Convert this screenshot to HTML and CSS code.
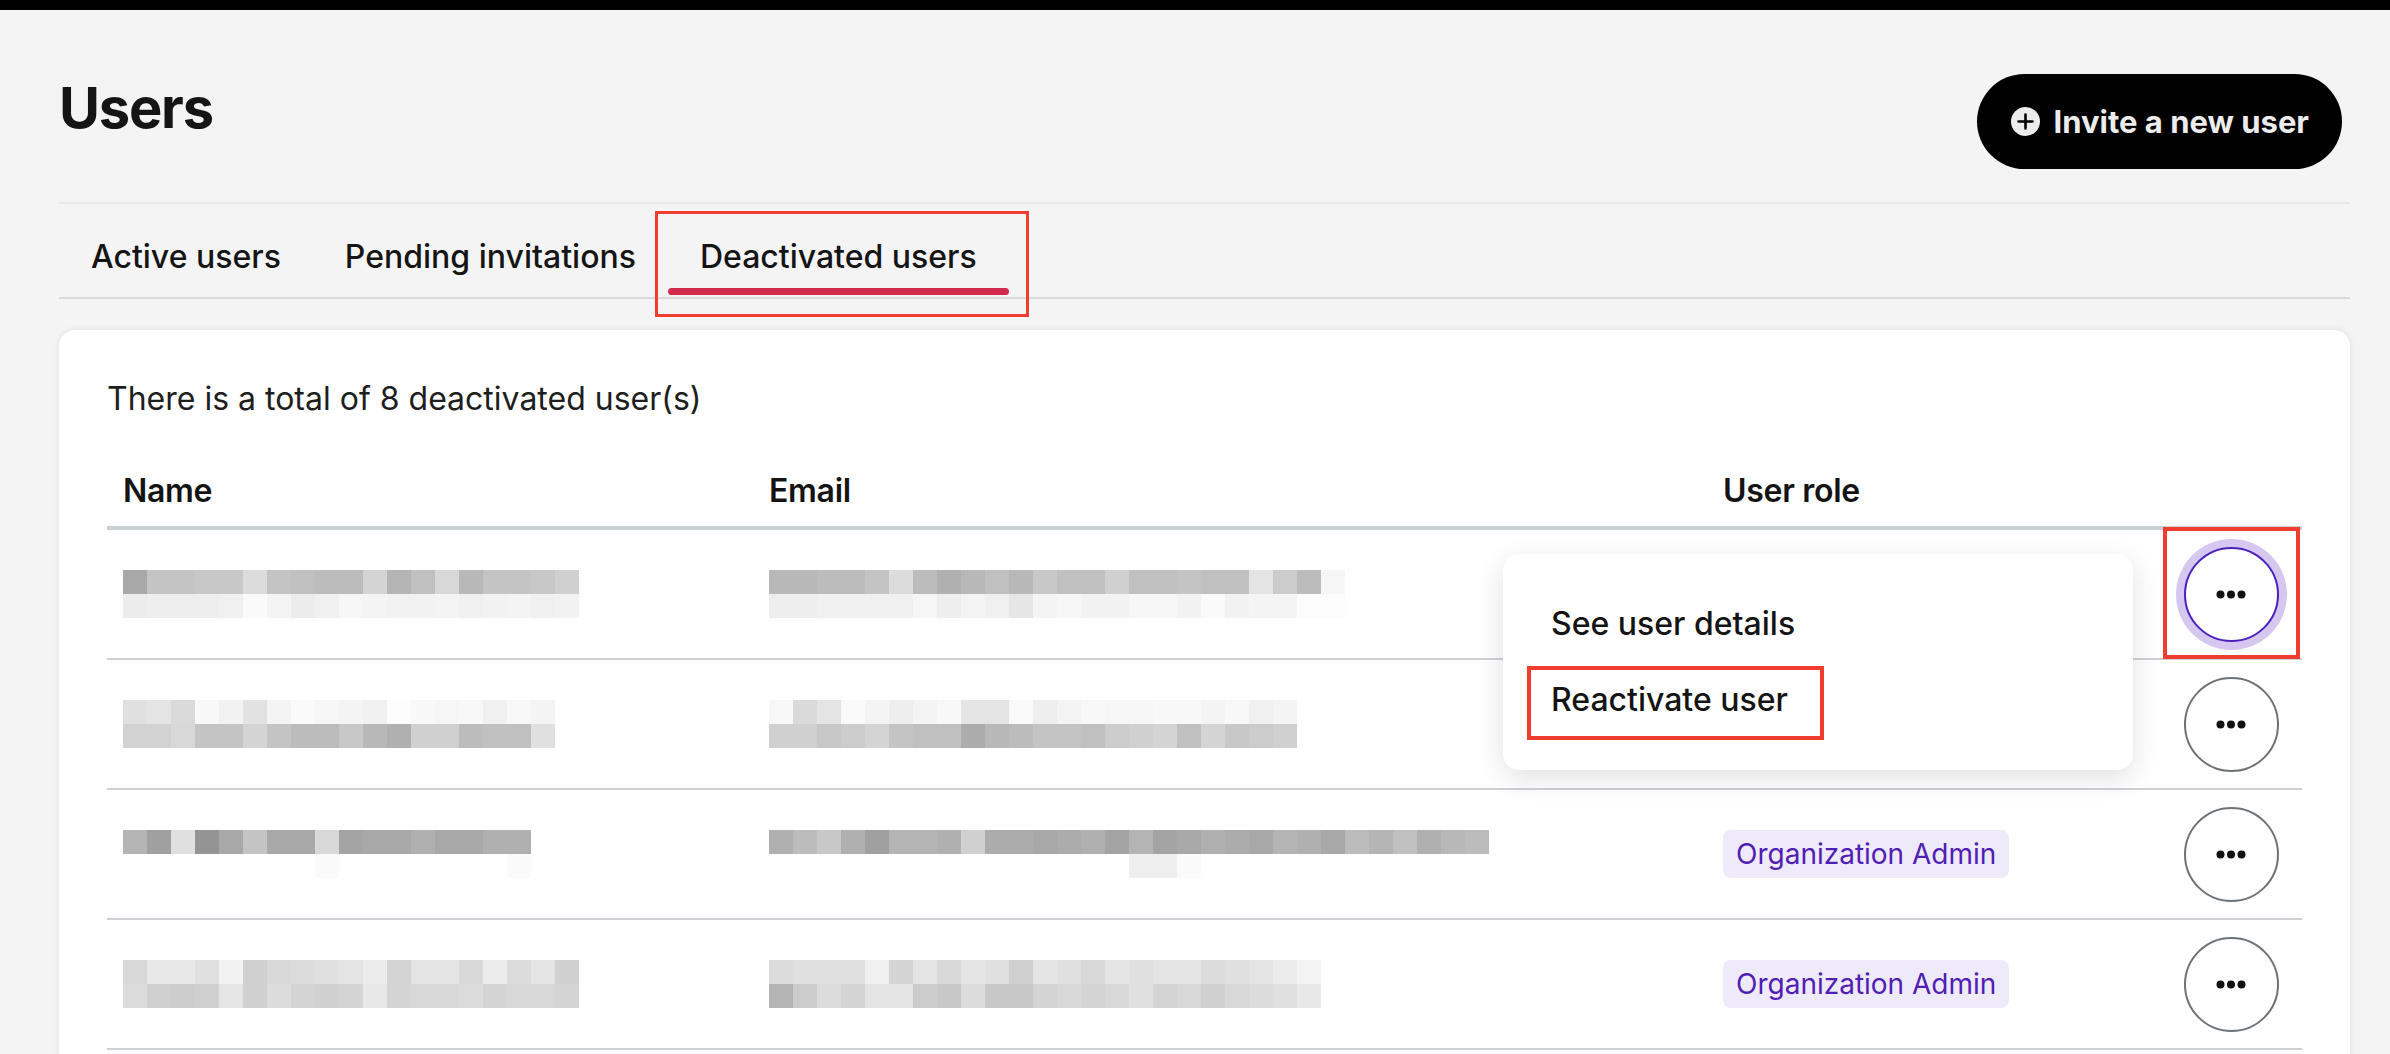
FILE: index.html
```html
<!DOCTYPE html>
<html lang="en">
	<head>
		<meta charset="UTF-8" />
		<meta name="viewport" content="width=device-width, initial-scale=1.0" />
		<title>Users</title>
		<link rel="stylesheet" href="styles.css">
	</head>
	<body>
		<div class="topbar"></div>
		<main class="page">
			<header class="page-header">
				<h1 class="page-title">Users</h1>
				<button class="invite-btn">
					<svg class="invite-icon" width="29" height="29" viewBox="0 0 29 29">
						<circle cx="14.5" cy="14.5" r="14.5" fill="#ececec" />
						<path d="M14.5 7.5v14M7.5 14.5h14" stroke="#000" stroke-width="2.6" stroke-linecap="round" />
					</svg>
					Invite a new user
				</button>
			</header>

			<nav class="tabs">
				<a class="tab">Active users<span class="tab-bar"></span></a>
				<a class="tab">Pending invitations<span class="tab-bar"></span></a>
				<a class="tab active">Deactivated users<span class="tab-bar"></span><span class="callout callout-tab"></span></a>
			</nav>

			<section class="card">
				<p class="summary">There is a total of 8 deactivated user(s)</p>

				<div class="users-table">
					<div class="table-row table-head">
						<div class="cell">Name</div>
						<div class="cell">Email</div>
						<div class="cell">User role</div>
						<div class="cell"></div>
					</div>

					<div class="table-row">
						<div class="cell"><div class="mosaic" data-rows="a8 c4 c4 c8 c8 dc c4 c0 bc bc d4 b4 c0 d8 b8 c4 c4 c8 d0|ec ee ee ee f0 fa f4 ec f0 f6 f4 f2 f2 f4 f0 f2 f4 f0 f2"></div></div>
						<div class="cell"><div class="mosaic" data-rows="b8 b8 bc bc c4 dc bc b0 b8 c0 b8 c8 c0 c0 d0 c0 c0 c4 c0 c0 e4 cc bc f6|ee ee f0 f0 f0 f0 f6 ee f4 f0 e6 f4 f6 f2 f2 f6 f6 f2 fa f2 f4 f4 fc fc"></div></div>
						<div class="cell"></div>
						<div class="cell cell-actions">
							<button class="more-btn focused">
								<svg width="30" height="9" viewBox="0 0 30 9"><circle cx="4.5" cy="4.5" r="4" /><circle cx="15" cy="4.5" r="4" /><circle cx="25.5" cy="4.5" r="4" /></svg>
							</button>
							<span class="callout callout-more"></span>
						</div>
					</div>

					<div class="table-row">
						<div class="cell"><div class="mosaic" data-rows="e0 e4 da f8 f2 e2 f4 fa f6 f4 f0 fc f8 f6 f8 f0 f8 f4|d2 d2 d8 c4 c4 d4 c4 bc bc c8 b8 b0 d0 d0 bc c0 c0 e0"></div></div>
						<div class="cell"><div class="mosaic" data-rows="f8 da e4 fa f4 ee f4 f8 e4 e4 fa ee f4 f8 f6 f6 f8 f8 f4 f8 f0 f4|d0 d0 c8 cc d4 c4 c0 c0 ac b8 bc c4 c4 c0 cc d0 d4 c0 d4 c8 cc d0"></div></div>
						<div class="cell"></div>
						<div class="cell cell-actions">
							<button class="more-btn">
								<svg width="30" height="9" viewBox="0 0 30 9"><circle cx="4.5" cy="4.5" r="4" /><circle cx="15" cy="4.5" r="4" /><circle cx="25.5" cy="4.5" r="4" /></svg>
							</button>
						</div>
					</div>

					<div class="table-row">
						<div class="cell"><div class="mosaic" data-rows="b4 a0 e0 94 a8 c4 a8 a8 d8 a4 a8 a8 b0 a8 a8 b0 b0|ff ff ff ff ff ff ff ff fa ff ff ff ff ff ff ff fa"></div></div>
						<div class="cell"><div class="mosaic" data-rows="b0 bc c8 b0 a0 b4 b4 b0 d0 ac ac a8 ac b0 a4 b4 a4 a8 b0 ac a8 b4 b0 a8 bc b4 c0 b0 b8 bc|ff ff ff ff ff ff ff ff ff ff ff ff ff ff ff ef ef fa ff ff ff ff ff ff ff ff ff ff ff ff"></div></div>
						<div class="cell"><span class="role-badge">Organization Admin</span></div>
						<div class="cell cell-actions">
							<button class="more-btn">
								<svg width="30" height="9" viewBox="0 0 30 9"><circle cx="4.5" cy="4.5" r="4" /><circle cx="15" cy="4.5" r="4" /><circle cx="25.5" cy="4.5" r="4" /></svg>
							</button>
						</div>
					</div>

					<div class="table-row">
						<div class="cell"><div class="mosaic" data-rows="d8 e8 e8 e0 f2 d0 d8 dc e0 e4 ec d4 e4 e4 d8 ec dc e4 d0|dc d0 cc d0 e6 d0 dc d4 d0 d4 e8 d4 d8 d8 dc d4 d8 d8 d4"></div></div>
						<div class="cell"><div class="mosaic" data-rows="dc e0 e0 e0 f0 d4 e4 d8 e4 e0 d0 e4 e0 d8 e4 e0 e4 e4 dc e0 e4 ec f4|b4 cc dc d4 e4 e4 cc c8 dc c8 c8 d4 d8 d4 d8 e0 d4 d8 d0 d8 dc e0 e8"></div></div>
						<div class="cell"><span class="role-badge">Organization Admin</span></div>
						<div class="cell cell-actions">
							<button class="more-btn">
								<svg width="30" height="9" viewBox="0 0 30 9"><circle cx="4.5" cy="4.5" r="4" /><circle cx="15" cy="4.5" r="4" /><circle cx="25.5" cy="4.5" r="4" /></svg>
							</button>
						</div>
					</div>

					<div class="table-row">
						<div class="cell"></div>
						<div class="cell"></div>
						<div class="cell"></div>
						<div class="cell"></div>
					</div>

					<!-- open action menu for the first row -->
					<div class="row-menu">
						<div class="menu-item">See user details</div>
						<div class="menu-item">Reactivate user<span class="callout callout-menu"></span></div>
					</div>
				</div>
			</section>
		</main>
		<script src="script.js"></script>
	</body>
</html>
```

FILE: styles.css
```css
body {
	margin: 0;
	background-color: #f4f4f4;
	font-family: "Inter", "Noto Sans", sans-serif;
	color: #1a1a1a;
	overflow: hidden;
}
.topbar {
	height: 10px;
	background-color: #000;
}
.page {
	padding: 64px 40px 0 59px;
}
.page-header {
	display: flex;
	justify-content: space-between;
	align-items: flex-start;
	margin-bottom: 33px;
}
.page-title {
	margin: 1px 0 0;
	font-size: 56px;
	line-height: 67px;
	font-weight: 700;
	color: #151515;
	letter-spacing: -1.2px;
}
.invite-btn {
	display: inline-flex;
	align-items: center;
	gap: 14px;
	height: 95px;
	margin-right: 8px;
	padding: 0 33px 0 34px;
	border: none;
	border-radius: 48px;
	background-color: #000;
	color: #ececec;
	font-family: "Inter", sans-serif;
	font-size: 31px;
	font-weight: 700;
	letter-spacing: 0;
}
.invite-icon {
	flex-shrink: 0;
}
.tabs {
	display: flex;
	border-top: 2px solid #e7e7e7;
	border-bottom: 2px solid #dadada;
}
.tab {
	position: relative;
	display: flex;
	flex-direction: column;
	padding: 30px 32px 2px;
	font-size: 32px;
	line-height: 45px;
	font-weight: 500;
	color: #151515;
}
.tab-bar {
	height: 7px;
	margin: 9px -32px 0;
	border-radius: 4px;
}
.tab.active .tab-bar {
	background-color: #d22b4d;
}
.callout {
	position: absolute;
	border: 3px solid #ef3e30;
	pointer-events: none;
}
.callout-tab {
	left: -13px;
	right: -20px;
	top: 7px;
	bottom: -20px;
}
.card {
	margin-top: 31px;
	padding: 46px 48px 0;
	height: 900px;
	background-color: #fff;
	border-radius: 16px;
	box-shadow: 0 0 6px rgba(0, 0, 0, 0.1);
}
.summary {
	margin: 0 0 47px;
	font-size: 32px;
	line-height: 45px;
	color: #1e1e1e;
}
.users-table {
	position: relative;
}
.table-row {
	display: grid;
	grid-template-columns: 646px 954px 1fr 142px;
	align-items: center;
	height: 128px;
	border-bottom: 2px solid #cdd1d5;
}
.table-head {
	height: auto;
	padding-bottom: 13px;
	border-bottom: 4px solid #cbd0d5;
	font-size: 32px;
	line-height: 45px;
	font-weight: 600;
	color: #141414;
	letter-spacing: -0.3px;
}
.cell {
	padding-left: 16px;
}
.cell-actions {
	position: relative;
	align-self: stretch;
	display: flex;
	align-items: center;
	justify-content: center;
	padding-left: 0;
}
.mosaic-row {
	display: flex;
}
.mosaic-row span {
	width: 24px;
	height: 24px;
}
.role-badge {
	display: inline-block;
	height: 48px;
	padding: 0 13px;
	border-radius: 8px;
	background-color: #eeeaf9;
	color: #5020b4;
	font-size: 28px;
	line-height: 48px;
}
.more-btn {
	display: flex;
	align-items: center;
	justify-content: center;
	width: 95px;
	height: 95px;
	border: 2px solid #6d7277;
	border-radius: 50%;
	background-color: #fff;
	padding: 0;
}
.more-btn svg {
	fill: #111;
}
.more-btn.focused {
	border-color: #4b20bf;
	box-shadow: 0 0 0 8px #d5c7f0;
}
.callout-more {
	left: 3px;
	right: 2px;
	top: -3px;
	bottom: -1px;
	border-width: 4px;
}
.row-menu {
	position: absolute;
	top: 86px;
	right: 169px;
	width: 630px;
	padding: 32px 0;
	background-color: #fff;
	border-radius: 16px;
	box-shadow: 0 8px 28px rgba(0, 0, 0, 0.12);
}
.menu-item {
	position: relative;
	height: 76px;
	padding-left: 48px;
	font-size: 32px;
	line-height: 76px;
	font-weight: 500;
	color: #141414;
}
.callout-menu {
	left: 24px;
	width: 289px;
	top: 4px;
	bottom: -2px;
	border-width: 4px;
}
```

FILE: script.js
```js
// Build the pixelated (redacted) blocks from their shade data
document.querySelectorAll(".mosaic").forEach(function (el) {
	el.dataset.rows.split("|").forEach(function (row) {
		const line = document.createElement("div");
		line.className = "mosaic-row";
		row.trim().split(/\s+/).forEach(function (v) {
			const px = document.createElement("span");
			px.style.background = "#" + v + v + v;
			line.appendChild(px);
		});
		el.appendChild(line);
	});
});
```
